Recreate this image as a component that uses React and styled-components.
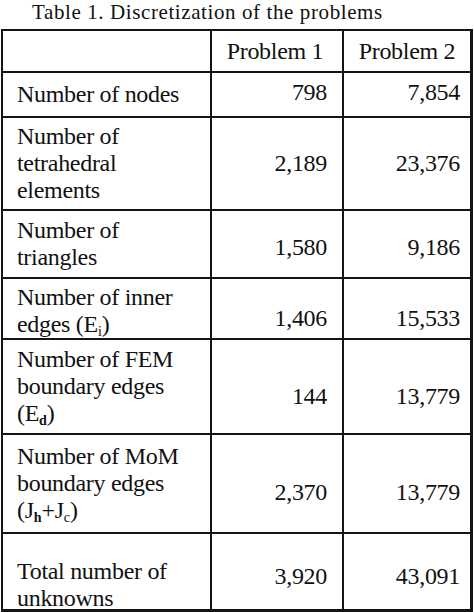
import React from 'react';
import styled, { createGlobalStyle } from 'styled-components';

const GlobalStyle = createGlobalStyle`
  html, body {
    margin: 0;
    padding: 0;
    background: #ffffff;
  }

  body {
    color: #111111;
    font-family: 'Liberation Serif', 'Times New Roman', serif;
  }
`;

const Page = styled.div`
  background: #ffffff;
  height: 612px;
  overflow: hidden;
  width: 474px;
`;

const Caption = styled.div`
  font-size: 21px;
  height: 29px;
  letter-spacing: 0.6px;
  line-height: 24px;
  padding-left: 32px;
  white-space: nowrap;
`;

const Grid = styled.div`
  border-left: 2px solid #151515;
  border-top: 2px solid #151515;
  display: grid;
  grid-template-columns: 209px 132px 129px;
  margin-left: 1px;
  width: 470px;
`;

const Cell = styled.div`
  align-items: center;
  border-bottom: ${(p) => (p.$last ? 3 : 2)}px solid #151515;
  border-right: ${(p) => (p.$edge ? 3 : 2)}px solid #151515;
  box-sizing: border-box;
  display: flex;
  font-size: 24px;
  height: ${(p) => p.$h}px;
  justify-content: ${(p) => p.$justify || 'flex-start'};
  letter-spacing: -0.3px;
  line-height: 27px;
  padding-bottom: ${(p) => (p.$shift < 0 ? -2 * p.$shift : 0)}px;
  padding-left: ${(p) => p.$pl || 0}px;
  padding-right: ${(p) => p.$pr || 0}px;
  padding-top: ${(p) => (p.$shift > 0 ? 2 * p.$shift : 0)}px;
  white-space: nowrap;
`;

const Label = styled.div`
  line-height: 27px;
`;

const Sub = styled.sub`
  font-size: 14px;
  font-weight: ${(p) => (p.$bold ? 700 : 400)};
  letter-spacing: 0;
  line-height: 0;
  vertical-align: -4px;
`;

const rows = [
  {
    h: 45,
    label: ['Number of nodes'],
    p1: '798',
    p2: '7,854',
    shift: -2,
    labelShift: 0,
  },
  {
    h: 93,
    label: ['Number of', 'tetrahedral', 'elements'],
    p1: '2,189',
    p2: '23,376',
    shift: 0,
    labelShift: 0,
  },
  {
    h: 68,
    label: ['Number of', 'triangles'],
    p1: '1,580',
    p2: '9,186',
    shift: 3,
    labelShift: 0,
  },
  {
    h: 61,
    label: [
      'Number of inner',
      <>
        edges (E<Sub>i</Sub>)
      </>,
    ],
    p1: '1,406',
    p2: '15,533',
    shift: 10,
    labelShift: 2,
  },
  {
    h: 95,
    label: [
      'Number of FEM',
      'boundary edges',
      <>
        (E<Sub $bold>d</Sub>)
      </>,
    ],
    p1: '144',
    p2: '13,779',
    shift: 10,
    labelShift: 0,
  },
  {
    h: 99,
    label: [
      'Number of MoM',
      'boundary edges',
      <>
        (J<Sub $bold>h</Sub>+J<Sub>c</Sub>)
      </>,
    ],
    p1: '2,370',
    p2: '13,779',
    shift: 9,
    labelShift: 0,
  },
  {
    h: 78,
    label: ['Total number of', 'unknowns'],
    p1: '3,920',
    p2: '43,091',
    shift: 5,
    labelShift: 13,
    last: true,
  },
];

const App = () => {
  return (
    <Page>
      <GlobalStyle />
      <Caption>Table 1. Discretization of the problems</Caption>
      <Grid>
        <Cell $h={42} $shift={0} />
        <Cell $h={42} $shift={0} $justify="center" $pr={4}>
          Problem 1
        </Cell>
        <Cell $h={42} $shift={0} $justify="center" $edge>
          Problem 2
        </Cell>
        {rows.map((row, i) => (
          <React.Fragment key={i}>
            <Cell $h={row.h} $shift={row.labelShift} $pl={14} $last={row.last}>
              <Label>
                {row.label.map((line, j) => (
                  <div key={j}>{line}</div>
                ))}
              </Label>
            </Cell>
            <Cell
              $h={row.h}
              $shift={row.shift}
              $justify="flex-end"
              $pr={15}
              $last={row.last}
            >
              {row.p1}
            </Cell>
            <Cell
              $h={row.h}
              $shift={row.shift}
              $justify="flex-end"
              $pr={10}
              $edge
              $last={row.last}
            >
              {row.p2}
            </Cell>
          </React.Fragment>
        ))}
      </Grid>
    </Page>
  );
};

export default App;
